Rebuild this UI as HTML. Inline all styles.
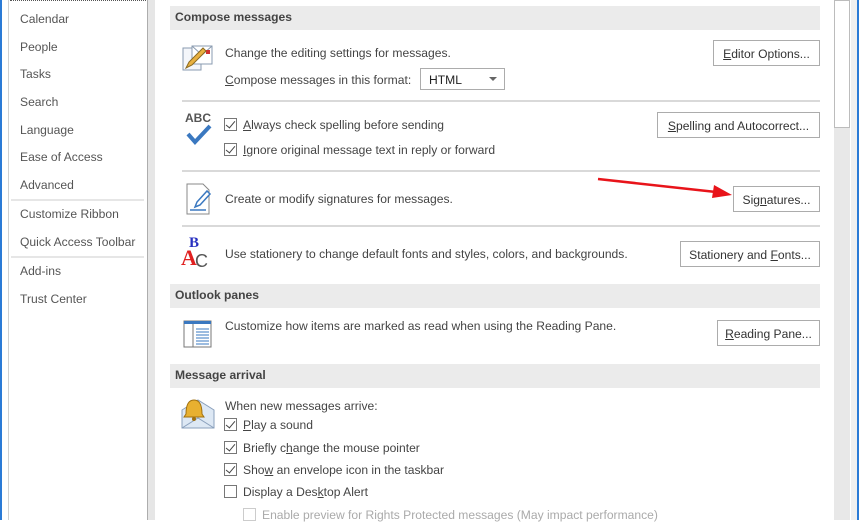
<!DOCTYPE html>
<html><head><meta charset="utf-8"><style>
*{margin:0;padding:0;box-sizing:border-box}
body{width:860px;height:520px;overflow:hidden;background:#fff;font-family:"Liberation Sans",sans-serif;font-size:12.1px;color:#444;position:relative}
.a{position:absolute;white-space:nowrap}
.nav{left:20px;color:#555}
.hdr{position:absolute;left:170px;width:650px;height:24px;background:#ebebeb;font-weight:bold;padding:4px 0 0 5px;color:#444}
.sep{position:absolute;left:182px;width:638px;height:2px;background:#d9d9d9}
.btn{position:absolute;height:26px;border:1px solid #acacac;background:#fff;text-align:center;padding-top:6px;color:#333}
.cb{position:absolute;width:13px;height:13px;border:1px solid #777;background:#fff}
.cb.c::after{content:"";position:absolute;left:3px;top:0px;width:4px;height:8px;border:solid #444;border-width:0 1.5px 1.5px 0;transform:rotate(40deg)}
u{text-decoration:underline}
</style></head><body>
<div class="a" style="left:0;top:0;width:2px;height:520px;background:#2b7bd6"></div>
<div class="a" style="left:857px;top:0;width:2px;height:520px;background:#2b7bd6"></div>
<div class="a" style="left:8px;top:0;width:140px;height:520px;border-right:1px solid #adadad;border-left:1px solid #d0d0d0"></div>
<div class="a" style="left:10px;top:0;width:136px;height:1px;border-top:1px dotted #555"></div>
<div class="a" style="left:148px;top:0;width:7px;height:520px;background:#e6e6e6"></div>
<div class="a" style="left:834px;top:0;width:16px;height:520px;background:#e8e8e8"></div>
<div class="a" style="left:834px;top:0;width:16px;height:128px;background:#fff;border:1px solid #bcbcbc"></div>
<div class="a" style="left:851px;top:0;width:6px;height:520px;background:#f0f0f0"></div>

<div class="a nav" style="top:12px">Calendar</div>
<div class="a nav" style="top:40px">People</div>
<div class="a nav" style="top:67px">Tasks</div>
<div class="a nav" style="top:95px">Search</div>
<div class="a nav" style="top:123px">Language</div>
<div class="a nav" style="top:150px">Ease of Access</div>
<div class="a nav" style="top:178px">Advanced</div>
<div class="a" style="left:11px;top:199px;width:133px;height:2px;background:#e6e6e6"></div>
<div class="a nav" style="top:207px">Customize Ribbon</div>
<div class="a nav" style="top:235px">Quick Access Toolbar</div>
<div class="a" style="left:11px;top:256px;width:133px;height:2px;background:#e6e6e6"></div>
<div class="a nav" style="top:264px">Add-ins</div>
<div class="a nav" style="top:292px">Trust Center</div>

<div class="hdr" style="top:6px">Compose messages</div>
<svg class="a" style="left:182px;top:40px" width="32" height="32"><rect x="1" y="8" width="18" height="22" fill="#f4f6fa" stroke="#8a9bb0"/><path d="M10 6h20v18H10z" fill="#fff" stroke="#8a9bb0"/><path d="M10 6l10 9 10-9" fill="none" stroke="#8a9bb0"/><rect x="24" y="10" width="4" height="4" fill="#d03030"/><path d="M4 28l3-6 14-14 3 3-14 14z" fill="#e8b040" stroke="#8a6a20"/></svg>
<div class="a" style="left:225px;top:46px">Change the editing settings for messages.</div>
<div class="a" style="left:225px;top:73px"><u>C</u>ompose messages in this format:</div>
<div class="a" style="left:420px;top:68px;width:85px;height:22px;border:1px solid #acacac;padding:4px 0 0 8px;color:#222">HTML<span style="position:absolute;right:7px;top:8px;border:4px solid transparent;border-top:4px solid #666"></span></div>
<div class="btn" style="left:713px;top:40px;width:107px"><u>E</u>ditor Options...</div>
<div class="sep" style="top:100px"></div>

<div class="a" style="left:185px;top:111px;font-size:12px;color:#555;font-weight:bold">ABC</div>
<svg class="a" style="left:186px;top:124px" width="26" height="22"><path d="M2 10l7 8L24 2" fill="none" stroke="#3a78c0" stroke-width="4"/></svg>
<div class="cb c" style="left:224px;top:118px"></div>
<div class="a" style="left:243px;top:118px"><u>A</u>lways check spelling before sending</div>
<div class="cb c" style="left:224px;top:143px"></div>
<div class="a" style="left:243px;top:143px"><u>I</u>gnore original message text in reply or forward</div>
<div class="btn" style="left:657px;top:112px;width:163px"><u>S</u>pelling and Autocorrect...</div>
<div class="sep" style="top:170px"></div>

<svg class="a" style="left:186px;top:183px" width="30" height="32"><path d="M1 1h16l6 6v24H1z" fill="#fff" stroke="#888"/><path d="M4 27h16" stroke="#3a78c0" stroke-width="1.5"/><path d="M9 24l2-5 10-11 3 3-10 11z" fill="#fff" stroke="#3a78c0" stroke-width="1.5"/></svg>
<div class="a" style="left:225px;top:192px">Create or modify signatures for messages.</div>
<div class="btn" style="left:733px;top:186px;width:87px">Sig<u>n</u>atures...</div>
<svg class="a" style="left:596px;top:172px" width="140" height="30"><path d="M2 7L120 20" stroke="#e8141a" stroke-width="2.5"/><path d="M136 23l-18-10-2 13z" fill="#e8141a"/></svg>
<div class="sep" style="top:225px"></div>

<div class="a" style="left:181px;top:237px;width:34px;height:34px">
<span class="a" style="left:8px;top:-2px;font:bold 15px 'Liberation Serif',serif;color:#2830c0">B</span>
<span class="a" style="left:0;top:8px;font:bold 22px 'Liberation Serif',serif;color:#e02020">A</span>
<span class="a" style="left:14px;top:14px;font:18px 'Liberation Sans',sans-serif;color:#555">C</span></div>
<div class="a" style="left:225px;top:247px">Use stationery to change default fonts and styles, colors, and backgrounds.</div>
<div class="btn" style="left:680px;top:241px;width:140px">Stationery and <u>F</u>onts...</div>

<div class="hdr" style="top:284px">Outlook panes</div>
<svg class="a" style="left:183px;top:320px" width="30" height="28"><rect x="1" y="1" width="27" height="26" fill="#fff" stroke="#777"/><rect x="1" y="1" width="27" height="3" fill="#3a78c0"/><path d="M10 4v23" stroke="#777"/><path d="M13 9h13M13 12h13M13 15h13M13 18h13M13 21h13M13 24h13" stroke="#3a78c0"/></svg>
<div class="a" style="left:225px;top:319px">Customize how items are marked as read when using the Reading Pane.</div>
<div class="btn" style="left:717px;top:320px;width:103px"><u>R</u>eading Pane...</div>

<div class="hdr" style="top:364px">Message arrival</div>
<svg class="a" style="left:181px;top:396px" width="34" height="34"><path d="M1 14l16-10 16 10v18H1z" fill="#dde8f4" stroke="#8aa0bc"/><path d="M1 32l16-10 16 10" fill="none" stroke="#8aa0bc"/><path d="M5 18c0-10 3-14 8-14s8 4 8 14l2 3H3z" fill="#e8b030" stroke="#a07010"/><circle cx="13" cy="23" r="2" fill="#a07010"/></svg>
<div class="a" style="left:225px;top:399px">When new messages arrive:</div>
<div class="cb c" style="left:224px;top:418px"></div>
<div class="a" style="left:243px;top:418px"><u>P</u>lay a sound</div>
<div class="cb c" style="left:224px;top:441px"></div>
<div class="a" style="left:243px;top:441px">Briefly c<u>h</u>ange the mouse pointer</div>
<div class="cb c" style="left:224px;top:463px"></div>
<div class="a" style="left:243px;top:463px">Sho<u>w</u> an envelope icon in the taskbar</div>
<div class="cb" style="left:224px;top:485px"></div>
<div class="a" style="left:243px;top:485px">Display a Des<u>k</u>top Alert</div>
<div class="cb" style="left:243px;top:508px;border-color:#ccc"></div>
<div class="a" style="left:262px;top:508px;color:#aaa">Enable preview for Rights Protected messages (May impact performance)</div>
</body></html>
